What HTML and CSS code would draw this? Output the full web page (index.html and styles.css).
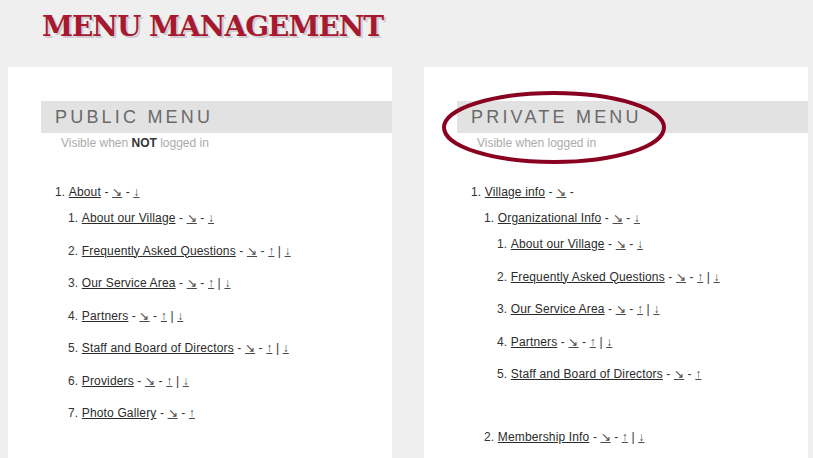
FILE: index.html
```html
<!DOCTYPE html>
<html lang="en">
<head>
<meta charset="utf-8">
<title>Menu Management</title>
<link rel="stylesheet" href="styles.css">
</head>
<body>
<h1 class="page-title">MENU MANAGEMENT</h1>
<div class="columns">
  <section class="card">
    <div class="card-head"><h2>PUBLIC MENU</h2></div>
    <p class="note">Visible when <b>NOT</b> logged in</p>
    <ol class="menu">
      <li><a href="#">About</a> - <a href="#" class="arr">↘</a> - <a href="#" class="arr">↓</a>
        <ol>
          <li><a href="#">About our Village</a> - <a href="#" class="arr">↘</a> - <a href="#" class="arr">↓</a></li>
          <li><a href="#">Frequently Asked Questions</a> - <a href="#" class="arr">↘</a> - <a href="#" class="arr">↑</a> | <a href="#" class="arr">↓</a></li>
          <li><a href="#">Our Service Area</a> - <a href="#" class="arr">↘</a> - <a href="#" class="arr">↑</a> | <a href="#" class="arr">↓</a></li>
          <li><a href="#">Partners</a> - <a href="#" class="arr">↘</a> - <a href="#" class="arr">↑</a> | <a href="#" class="arr">↓</a></li>
          <li><a href="#">Staff and Board of Directors</a> - <a href="#" class="arr">↘</a> - <a href="#" class="arr">↑</a> | <a href="#" class="arr">↓</a></li>
          <li><a href="#">Providers</a> - <a href="#" class="arr">↘</a> - <a href="#" class="arr">↑</a> | <a href="#" class="arr">↓</a></li>
          <li><a href="#">Photo Gallery</a> - <a href="#" class="arr">↘</a> - <a href="#" class="arr">↑</a></li>
        </ol>
      </li>
    </ol>
  </section>
  <section class="card card-private">
    <div class="card-head"><h2>PRIVATE MENU</h2></div>
    <p class="note">Visible when logged in</p>
    <svg class="circle-mark" width="224" height="73" viewBox="0 0 224 73" aria-hidden="true">
      <ellipse cx="112" cy="36.5" rx="110" ry="34.5" fill="none" stroke="#8a0020" stroke-width="4"/>
    </svg>
    <ol class="menu">
      <li><a href="#">Village info</a> - <a href="#" class="arr">↘</a> -
        <ol>
          <li><a href="#">Organizational Info</a> - <a href="#" class="arr">↘</a> - <a href="#" class="arr">↓</a>
            <ol>
              <li><a href="#">About our Village</a> - <a href="#" class="arr">↘</a> - <a href="#" class="arr">↓</a></li>
              <li><a href="#">Frequently Asked Questions</a> - <a href="#" class="arr">↘</a> - <a href="#" class="arr">↑</a> | <a href="#" class="arr">↓</a></li>
              <li><a href="#">Our Service Area</a> - <a href="#" class="arr">↘</a> - <a href="#" class="arr">↑</a> | <a href="#" class="arr">↓</a></li>
              <li><a href="#">Partners</a> - <a href="#" class="arr">↘</a> - <a href="#" class="arr">↑</a> | <a href="#" class="arr">↓</a></li>
              <li><a href="#">Staff and Board of Directors</a> - <a href="#" class="arr">↘</a> - <a href="#" class="arr">↑</a></li>
            </ol>
          </li>
          <li><a href="#">Membership Info</a> - <a href="#" class="arr">↘</a> - <a href="#" class="arr">↑</a> | <a href="#" class="arr">↓</a>
            <ol>
              <li><a href="#">Membership Benefits</a> - <a href="#" class="arr">↘</a> - <a href="#" class="arr">↓</a></li>
            </ol>
          </li>
        </ol>
      </li>
    </ol>
  </section>
</div>
</body>
</html>
```

FILE: styles.css
```css
html, body {
  margin: 0;
  padding: 0;
  background: #efefef;
  overflow: hidden;
}

body {
  font-family: "Liberation Sans", Arial, sans-serif;
  height: 458px;
}

.page-title {
  margin: 9px 0 22px 0;
  padding-left: 42px;
  font-family: "DejaVu Serif", serif;
  font-weight: bold;
  font-size: 28px;
  line-height: 36px;
  letter-spacing: -1px;
  color: #a6192e;
  text-shadow: 2px 2px 0 #cfcbd3;
}

.columns {
  display: grid;
  grid-template-columns: 384px 384px;
  column-gap: 32px;
  padding-left: 8px;
}

.card {
  position: relative;
  background: #ffffff;
  padding-top: 34px;
  min-height: 420px;
}

.card-head {
  margin-left: 33px;
  height: 32px;
  background: #e2e2e2;
  padding-left: 14px;
}

.card-head h2 {
  margin: 0;
  font-weight: normal;
  font-size: 18px;
  line-height: 32px;
  letter-spacing: 3.2px;
  color: #6a6a6a;
}

.note {
  margin: 2px 0 0 53px;
  font-size: 12px;
  line-height: 16px;
  color: #ababab;
}

.note b {
  color: #333333;
}

.circle-mark {
  position: absolute;
  left: 18px;
  top: 24px;
}

.menu {
  list-style: decimal inside;
  margin: 33px 0 0 0;
  padding: 0 0 0 47px;
  font-size: 12px;
  line-height: 16px;
  letter-spacing: 0.15px;
  color: #333333;
}

.menu ol {
  list-style: decimal inside;
  margin: 0;
  padding: 10px 0 0 13px;
}

.menu ol ol {
  padding-bottom: 14px;
}

.menu li {
  padding-bottom: 16.5px;
}

.menu a {
  color: #2b2b2b;
  text-decoration: underline;
}

.menu a.arr {
  color: #4a4a4a;
}
```
